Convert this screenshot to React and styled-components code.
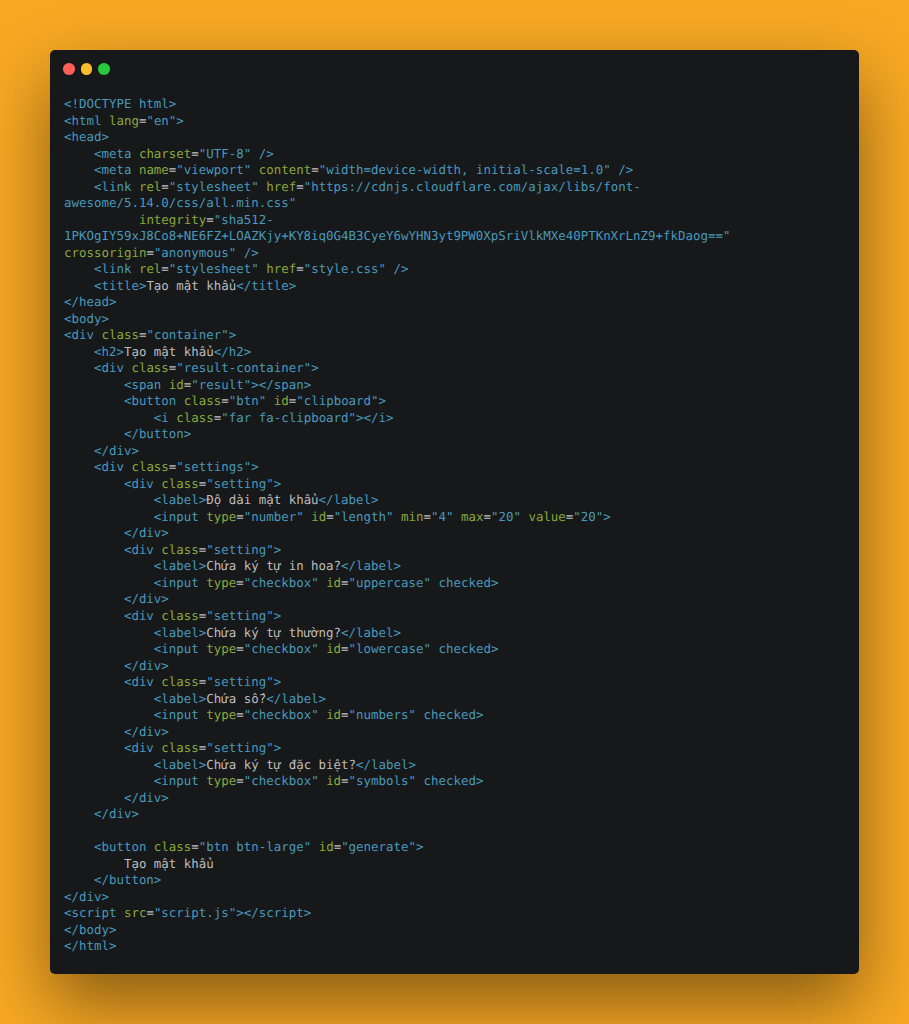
import React from "react"
import styled, { createGlobalStyle } from "styled-components"

const source = [
  { t: '<!DOCTYPE html>' },
  { t: '<html lang="en">' },
  { t: '<head>' },
  { t: '    <meta charset="UTF-8" />' },
  { t: '    <meta name="viewport" content="width=device-width, initial-scale=1.0" />' },
  { t: '    <link rel="stylesheet" href="https://cdnjs.cloudflare.com/ajax/libs/font-' },
  { t: 'awesome/5.14.0/css/all.min.css"', raw: true },
  { t: '          integrity="sha512-' },
  { t: '1PKOgIY59xJ8Co8+NE6FZ+LOAZKjy+KY8iq0G4B3CyeY6wYHN3yt9PW0XpSriVlkMXe40PTKnXrLnZ9+fkDaog=="', raw: true },
  { t: 'crossorigin="anonymous" />' },
  { t: '    <link rel="stylesheet" href="style.css" />' },
  { t: '    <title>Tạo mật khẩu</title>' },
  { t: '</head>' },
  { t: '<body>' },
  { t: '<div class="container">' },
  { t: '    <h2>Tạo mật khẩu</h2>' },
  { t: '    <div class="result-container">' },
  { t: '        <span id="result"></span>' },
  { t: '        <button class="btn" id="clipboard">' },
  { t: '            <i class="far fa-clipboard"></i>' },
  { t: '        </button>' },
  { t: '    </div>' },
  { t: '    <div class="settings">' },
  { t: '        <div class="setting">' },
  { t: '            <label>Độ dài mật khẩu</label>' },
  { t: '            <input type="number" id="length" min="4" max="20" value="20">' },
  { t: '        </div>' },
  { t: '        <div class="setting">' },
  { t: '            <label>Chứa ký tự in hoa?</label>' },
  { t: '            <input type="checkbox" id="uppercase" checked>' },
  { t: '        </div>' },
  { t: '        <div class="setting">' },
  { t: '            <label>Chứa ký tự thường?</label>' },
  { t: '            <input type="checkbox" id="lowercase" checked>' },
  { t: '        </div>' },
  { t: '        <div class="setting">' },
  { t: '            <label>Chứa số?</label>' },
  { t: '            <input type="checkbox" id="numbers" checked>' },
  { t: '        </div>' },
  { t: '        <div class="setting">' },
  { t: '            <label>Chứa ký tự đặc biệt?</label>' },
  { t: '            <input type="checkbox" id="symbols" checked>' },
  { t: '        </div>' },
  { t: '    </div>' },
  { t: '' },
  { t: '    <button class="btn btn-large" id="generate">' },
  { t: '        Tạo mật khẩu', text: true },
  { t: '    </button>' },
  { t: '</div>' },
  { t: '<script src="script.js"></script>' },
  { t: '</body>' },
  { t: '</html>' },
]

// splits one line into coloured tokens
const tokenize = ({ t, raw, text }) => {
  if (raw) return [["tag", t]]
  if (text) return [["text", t]]
  const out = []
  const re = /("[^"]*"?)|([a-z-]+)(?==)|(=)|(?<=>)([^<]+)(?=<)/g
  let last = 0
  let m
  while ((m = re.exec(t))) {
    if (m.index > last) out.push(["tag", t.slice(last, m.index)])
    if (m[1]) out.push(["tag", m[1]])
    else if (m[2]) out.push(["attr", m[2]])
    else if (m[3]) out.push(["text", m[3]])
    else out.push(["text", m[4]])
    last = m.index + m[0].length
  }
  if (last < t.length) out.push(["tag", t.slice(last)])
  return out
}

const colors = { tag: "#4a98bc", attr: "#8aa83c", text: "#bdbdbd" }

const App = () => (
  <>
    <Global />
    <Page>
      <Window>
        <TitleBar>
          <Dot color="#ff5f56" />
          <Dot color="#ffbd2e" />
          <Dot color="#27c93f" />
        </TitleBar>
        <Code>
          {source.map((line, i) => (
            <Line key={i}>
              {tokenize(line).map(([kind, value], j) => (
                <Token key={j} $kind={kind}>
                  {value}
                </Token>
              ))}
            </Line>
          ))}
        </Code>
      </Window>
    </Page>
  </>
)
export default App

const Global = createGlobalStyle`
  html, body {
    margin: 0;
    padding: 0;
    background: #f7a823;
  }
`

const Page = styled.div`
  width: 909px;
  height: 1024px;
  overflow: hidden;
  padding: 50px;
  box-sizing: border-box;
  background: #f7a823;
`

const Window = styled.div`
  width: 809px;
  height: 924px;
  box-sizing: border-box;
  background: #16181a;
  border-radius: 5px;
  box-shadow: 0 30px 70px rgba(0, 0, 0, 0.45);
`

const TitleBar = styled.div`
  display: flex;
  gap: 6px;
  padding: 13px 13px 0;
  height: 37px;
  box-sizing: border-box;
`

const Dot = styled.span`
  width: 11.5px;
  height: 11.5px;
  border-radius: 50%;
  background: ${({ color }) => color};
`

const Code = styled.div`
  padding: 9px 14px 0;
  font-family: "DejaVu Sans Mono", monospace;
  font-size: 12.44px;
  line-height: 16.52px;
  text-rendering: geometricPrecision;
`

const Line = styled.div`
  height: 16.52px;
  white-space: pre;
`

const Token = styled.span`
  color: ${({ $kind }) => colors[$kind]};
`
